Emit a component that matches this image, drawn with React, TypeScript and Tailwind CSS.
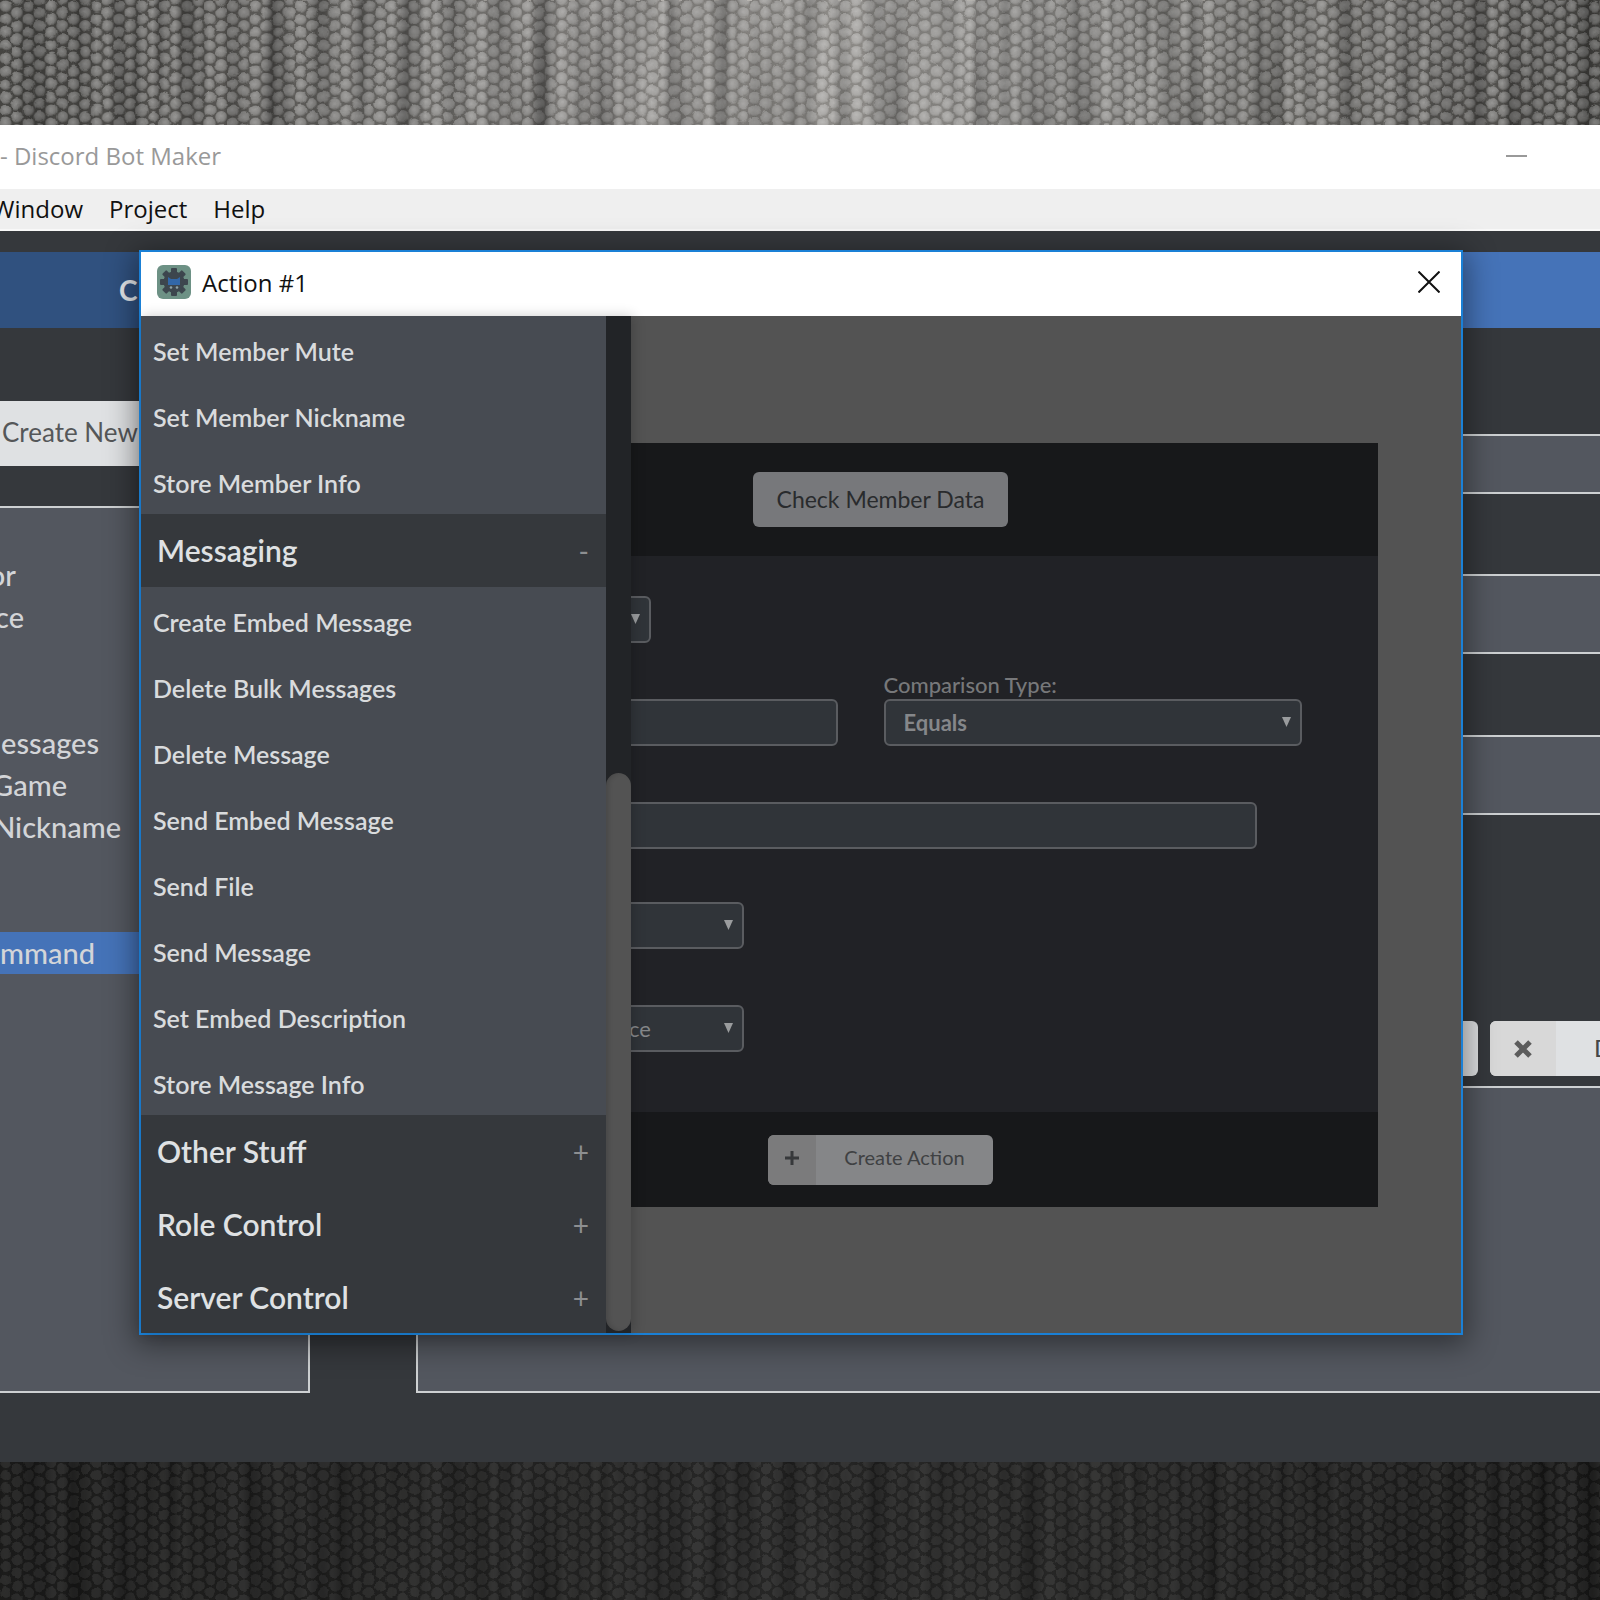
import React from "react";

const SANS = "font-['Open_Sans','Noto_Sans',sans-serif]";

function Wallpaper() {
  return (
    <svg className="absolute inset-0 h-full w-full" aria-hidden="true">
      <defs>
        <radialGradient id="bead" cx="45%" cy="40%" r="60%">
          <stop offset="0" stopColor="#fff" stopOpacity="0.4" />
          <stop offset="0.7" stopColor="#fff" stopOpacity="0.27" />
          <stop offset="1" stopColor="#fff" stopOpacity="0.05" />
        </radialGradient>
        <pattern id="beads" width="22.7" height="13" patternUnits="userSpaceOnUse">
          <rect width="22.7" height="13" fill="#000" fillOpacity="0.28" />
          <circle cx="5.7" cy="6.5" r="6" fill="url(#bead)" />
          <circle cx="17" cy="0" r="6" fill="url(#bead)" />
          <circle cx="17" cy="13" r="6" fill="url(#bead)" />
        </pattern>
        <pattern id="beadsDark" width="22.7" height="13" patternUnits="userSpaceOnUse">
          <rect width="22.7" height="13" fill="#000" fillOpacity="0.34" />
          <circle cx="5.7" cy="6.5" r="5.4" fill="#fff" fillOpacity="0.08" />
          <circle cx="17" cy="0" r="5.4" fill="#fff" fillOpacity="0.08" />
          <circle cx="17" cy="13" r="5.4" fill="#fff" fillOpacity="0.08" />
        </pattern>
        <linearGradient id="light">
          <stop offset="0" stopColor="#5f5e5a" />
          <stop offset="0.14" stopColor="#787672" />
          <stop offset="0.25" stopColor="#908e8a" />
          <stop offset="0.38" stopColor="#aeaba7" />
          <stop offset="0.5" stopColor="#c6c3be" />
          <stop offset="0.64" stopColor="#b0aeaa" />
          <stop offset="0.8" stopColor="#8e8c87" />
          <stop offset="0.92" stopColor="#75736f" />
          <stop offset="1" stopColor="#5f5e5a" />
        </linearGradient>
        <linearGradient id="dark">
          <stop offset="0" stopColor="#2a2a29" />
          <stop offset="0.4" stopColor="#3a3a39" />
          <stop offset="0.7" stopColor="#393938" />
          <stop offset="1" stopColor="#2a2a29" />
        </linearGradient>
        <filter id="uneven" x="0" y="0" width="100%" height="100%">
          <feTurbulence type="fractalNoise" baseFrequency="0.09" numOctaves="2" seed="4" />
          <feDisplacementMap in="SourceGraphic" scale="4" xChannelSelector="R" yChannelSelector="G" />
        </filter>
        <filter id="streaks" x="0" y="0" width="100%" height="100%">
          <feTurbulence type="fractalNoise" baseFrequency="0.045 0.002" numOctaves="2" seed="9" />
          <feColorMatrix values="0 0 0 0 0  0 0 0 0 0  0 0 0 0 0  0.8 0 0 0 -0.3" />
        </filter>
      </defs>
      <rect width="100%" height="50%" fill="url(#light)" />
      <rect y="50%" width="100%" height="50%" fill="url(#dark)" />
      <g filter="url(#uneven)">
        <rect width="100%" height="50%" fill="url(#beads)" />
        <rect y="50%" width="100%" height="50%" fill="url(#beadsDark)" />
      </g>
      <rect width="100%" height="100%" filter="url(#streaks)" />
    </svg>
  );
}

function GearLogo() {
  return (
    <svg className="h-[34px] w-[34px]" viewBox="0 0 34 34" aria-hidden="true">
      <rect width="34" height="34" rx="6" fill="#6d9185" />
      <g fill="#3d464e">
        {[0, 45, 90, 135].map((a) => (
          <rect key={a} x="14" y="3" width="6" height="28" rx="1" transform={`rotate(${a} 17 17)`} />
        ))}
        <circle cx="17" cy="17" r="10.500" />
      </g>
      <path d="M11 12l3 2h6l3-2v8H11z" fill="#3267a8" />
      <circle cx="14" cy="22.500" r="1.300" fill="#8fa3a6" />
      <circle cx="20" cy="22.500" r="1.300" fill="#8fa3a6" />
    </svg>
  );
}

function MenuItem({ label }: { label: string }) {
  return (
    <li>
      <button className="block w-full pt-1 pl-3 text-left text-[25px] leading-[62px] font-semibold text-[#d9dbdd]">{label}</button>
    </li>
  );
}

function MenuGroup({ label, open }: { label: string; open?: boolean }) {
  return (
    <button
      aria-expanded={!!open}
      className="flex h-[73px] w-full items-center justify-between bg-[#35383c] pr-[17px] pl-4 text-left text-[30px] font-semibold text-[#dfe1e3]"
    >
      <span>{label}</span>
      <span className="text-[28px] font-normal text-[#8d8f91]">{open ? "-" : "+"}</span>
    </button>
  );
}

const field = "h-[47px] rounded-md border-2 border-[#5a5c60] bg-[#303439] text-[#85878a]";

function Select({ label, value, className, text }: { label: string; value: string; className: string; text: string }) {
  return (
    <div className={`relative ${className}`}>
      <select aria-label={label} defaultValue={value} className={`w-full appearance-none text-[22px] ${field} ${text}`}>
        <option>{value}</option>
      </select>
      <svg className="pointer-events-none absolute top-[18px] right-[11px] h-[10px] w-[9px]" viewBox="0 0 9 10" aria-hidden="true">
        <path d="M0 0h9L4.500 10z" fill="#9a9c9e" />
      </svg>
    </div>
  );
}

const memberItems = ["Set Member Mute", "Set Member Nickname", "Store Member Info"];
const messagingItems = [
  "Create Embed Message",
  "Delete Bulk Messages",
  "Delete Message",
  "Send Embed Message",
  "Send File",
  "Send Message",
  "Set Embed Description",
  "Store Message Info",
];

const commands = [
  { text: "", width: "w-0" },
  { text: "or", width: "w-4" },
  { text: "ce", width: "w-6" },
  { text: "", width: "w-0" },
  { text: "", width: "w-0" },
  { text: "essages", width: "w-[99px]" },
  { text: "Game", width: "w-[67px]" },
  { text: "Nickname", width: "w-[121px]" },
  { text: "", width: "w-0" },
  { text: "", width: "w-0" },
  { text: "mmand", width: "w-[95px]", selected: true },
];

function ActionDialog() {
  return (
    <div
      role="dialog"
      aria-label="Action #1"
      className="absolute top-[125px] right-[137px] left-[139px] border-2 border-[#1a80d6] shadow-[0_6px_28px_4px_rgba(0,0,0,0.42)]"
    >
      <div className="flex h-16 items-center bg-white pr-[21px] pb-1 pl-4">
        <GearLogo />
        <h2 className={`ml-[11px] flex-1 pt-[2px] text-2xl text-[#111] ${SANS}`}>Action #1</h2>
        <button aria-label="Close">
          <svg className="h-[22px] w-[22px]" viewBox="0 0 22 22" stroke="#111" strokeWidth="2" aria-hidden="true">
            <path d="M0.500 0.500l21 21M21.500 0.500l-21 21" />
          </svg>
        </button>
      </div>

      <div className="relative bg-[#535353] pt-[127px] pr-[83px] pb-[126px] pl-[242px]">
        <section className="bg-[#212226]">
          <div className="flex h-[113px] items-center justify-center bg-[#17181a]">
            <button className="h-[55px] rounded-md bg-[#77787b] px-6 text-[23px] text-[#292b2d]">Check Member Data</button>
          </div>
          <form className="flex h-[556px] flex-col pt-10 pr-[76px] pl-9">
            <Select label="Member" value="" className="w-[232px]" text="pl-4" />
            <div className="mt-7 grid grid-cols-2 items-end gap-[46px]">
              <input aria-label="Variable Name" className={`w-full ${field}`} />
              <div>
                <span className="block text-[22px] leading-[28px] font-medium text-[#77787a]">Comparison Type:</span>
                <Select label="Comparison Type" value="Equals" className="w-full" text="pl-[18px] font-bold" />
              </div>
            </div>
            <input aria-label="Value to Compare to" className={`mt-14 mr-[45px] shrink-0 ${field}`} />
            <Select label="If True" value="" className="mt-[53px] w-[325px]" text="pl-4" />
            <Select label="If False" value="ce" className="mt-14 w-[325px]" text="pl-[208px]" />
          </form>
          <div className="flex h-[95px] items-center justify-center bg-[#17181a]">
            <button className="flex h-[50px] items-center overflow-hidden rounded-md bg-[#858688] text-xl text-[#3f4143]">
              <span className="flex h-full w-12 items-center justify-center bg-[#7b7b7c] pb-1">
                <svg className="h-4 w-4" viewBox="0 0 16 16" stroke="#37393b" strokeWidth="3" aria-hidden="true">
                  <path d="M8 1v14M1 8h14" />
                </svg>
              </span>
              <span className="px-7 pb-[6px]">Create Action</span>
            </button>
          </div>
        </section>

        <nav aria-label="Action types" className="absolute inset-y-0 left-0 flex w-[490px] overflow-hidden shadow-[2px_0_12px_rgba(0,0,0,0.2)]">
          <div className="flex-1 bg-[#474b52]">
            <ul>
              {memberItems.map((m) => (
                <MenuItem key={m} label={m} />
              ))}
            </ul>
            <MenuGroup label="Messaging" open />
            <ul>
              {messagingItems.map((m) => (
                <MenuItem key={m} label={m} />
              ))}
            </ul>
            <MenuGroup label="Other Stuff" />
            <MenuGroup label="Role Control" />
            <MenuGroup label="Server Control" />
          </div>
          <div className="flex w-[25px] flex-col justify-end bg-[#222427] pb-[2px]">
            <div className="h-[558px] rounded-full bg-[#535353] shadow-[inset_3px_0_4px_rgba(0,0,0,0.12)]" />
          </div>
        </nav>
      </div>
    </div>
  );
}

export default function App() {
  const box = "border-2 border-[#cdd0d2] bg-[#53575f]";
  return (
    <div className="relative min-h-screen overflow-hidden bg-[#2a2a29] pt-[125px] pb-[138px] font-[Lato,sans-serif]">
      <Wallpaper />
      <main className="relative bg-[#35383c]">
        <header className={SANS}>
          <div className="flex h-16 items-center justify-between bg-white pr-[73px] pb-[2px]">
            <h1 className="text-2xl text-[#999]">- Discord Bot Maker</h1>
            <button aria-label="Minimize" className="flex h-8 items-center">
              <span className="block h-[2px] w-[21px] bg-[#999]" />
            </button>
          </div>
          <nav className="flex h-[42px] items-center gap-[26px] border-b-2 border-[#f8f8f8] bg-[#efefef] text-2xl text-[#111]">
            <button className="flex w-[83px] justify-end">Window</button>
            <button>Project</button>
            <button>Help</button>
          </nav>
        </header>

        <div className="mt-[21px] flex h-[76px] bg-[#4573b8] text-[28px] font-bold text-[#e4e7ea]">
          <button className="w-1/4 bg-[#30517f] pl-[119px] text-left">C</button>
        </div>

        <div className="flex gap-[106px] pb-[69px]">
          <div className="w-[310px] pt-[73px]">
            <button className="block h-[65px] w-full bg-[#dfe1e3] pb-[2px] pl-[2px] text-left text-[26px] text-[#555759]">Create New</button>
            <ul className={`mt-10 h-[887px] border-l-0 pt-1 text-[29px] leading-[42px] font-medium text-[#d3d5d8] ${box}`}>
              {commands.map((c, i) => (
                <li key={i} className={c.selected ? "h-[42px] bg-[#4573b8]" : "h-[42px]"}>
                  <span className={`flex justify-end ${c.width}`}>{c.text}</span>
                </li>
              ))}
            </ul>
          </div>

          <div className="flex flex-1 flex-col pt-[106px]">
            <input aria-label="Name" className={`-mr-1 h-[60px] ${box}`} />
            <input aria-label="Permissions" className={`mt-20 -mr-1 h-20 ${box}`} />
            <input aria-label="Restriction" className={`mt-[81px] -mr-1 h-20 ${box}`} />
            <div className="mt-[206px] flex h-[55px] justify-end gap-3">
              <button aria-label="Edit" className="w-[200px] rounded-md bg-[#dfe1e3]" />
              <button className="flex w-[110px] items-center overflow-hidden rounded-l-md bg-[#dfe1e3] text-2xl text-[#444648]">
                <span className="flex h-full w-[66px] shrink-0 items-center justify-center bg-[#d8d8d8]">
                  <svg className="h-[18px] w-[18px]" viewBox="0 0 18 18" stroke="#5c5c5c" strokeWidth="5" aria-hidden="true">
                    <path d="M2 2l14 14M16 2L2 16" />
                  </svg>
                </span>
                <span className="pb-[2px] pl-[38px]">D</span>
              </button>
            </div>
            <div className={`mt-[10px] -mr-1 flex-1 ${box}`} />
          </div>
        </div>

        <ActionDialog />
      </main>
    </div>
  );
}
